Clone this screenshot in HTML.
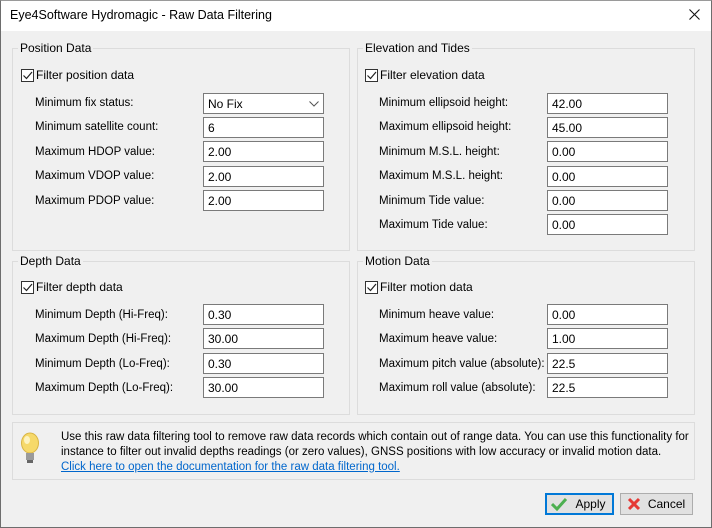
<!DOCTYPE html>
<html><head><meta charset="utf-8"><style>
*{box-sizing:border-box;margin:0;padding:0}
body{width:712px;height:528px;overflow:hidden;background:#f0f0f0;font-family:"Liberation Sans",sans-serif;font-size:11.5px;color:#000;position:relative}
.a{position:absolute;white-space:nowrap;line-height:16px}
.win{position:absolute;left:0;top:0;width:712px;height:528px;border:1px solid #6d6d6d;border-top:1px solid #9a9a9a}
.title{position:absolute;left:1px;top:1px;width:710px;height:30px;background:#fff}
.g{position:absolute;border:1px solid #dcdcdc}
.gl{position:absolute;background:#f0f0f0;padding:0 2px;top:-8px;left:5px;line-height:14px;font-size:12px}
.in{position:absolute;width:121px;height:21px;background:#fff;border:1px solid #7a7a7a;padding:3px 4px;line-height:15px;font-size:12px}
.cb{position:absolute;width:13px;height:13px;border:1px solid #333;background:#fff}
.cb svg{position:absolute;left:0;top:0}
.btn{position:absolute;height:22px;background:#e1e1e1;border:1px solid #adadad;text-align:center;line-height:20px;font-size:12px}
</style></head><body>
<div class="title"></div>
<div class="a" style="left:10px;top:7px;font-size:12.5px">Eye4Software Hydromagic - Raw Data Filtering</div>
<svg class="a" style="left:689px;top:9px" width="11" height="11"><path d="M0.5 0.5 L10.5 10.5 M10.5 0.5 L0.5 10.5" stroke="#111" stroke-width="1.1"/></svg>
<div class="win"></div>

<div class="g" style="left:12px;top:48px;width:338px;height:203px"><div class="gl">Position Data</div></div>
<div class="g" style="left:357px;top:48px;width:338px;height:203px"><div class="gl">Elevation and Tides</div></div>
<div class="g" style="left:12px;top:261px;width:338px;height:154px"><div class="gl">Depth Data</div></div>
<div class="g" style="left:357px;top:261px;width:338px;height:154px"><div class="gl">Motion Data</div></div>
<div class="g" style="left:12px;top:422px;width:683px;height:58px"></div>

<div class="cb" style="left:21px;top:69px"><svg width="11" height="11"><path d="M1.5 5.5 L4.5 8.5 L10 2" stroke="#222" stroke-width="1.2" fill="none"/></svg></div>
<div class="a" style="left:36px;top:67px;font-size:12px">Filter position data</div>
<div class="a" style="left:35px;top:95px">Minimum fix status:</div>
<div class="in" style="left:203px;top:93px">No Fix<svg style="position:absolute;right:4px;top:7px" width="10" height="6"><path d="M0.5 0.5 L5 5 L9.5 0.5" stroke="#555" fill="none"/></svg></div>
<div class="a" style="left:35px;top:119px">Minimum satellite count:</div>
<div class="in" style="left:203px;top:117px">6</div>
<div class="a" style="left:35px;top:144px">Maximum HDOP value:</div>
<div class="in" style="left:203px;top:141px">2.00</div>
<div class="a" style="left:35px;top:168px">Maximum VDOP value:</div>
<div class="in" style="left:203px;top:166px">2.00</div>
<div class="a" style="left:35px;top:193px">Maximum PDOP value:</div>
<div class="in" style="left:203px;top:190px">2.00</div>

<div class="cb" style="left:365px;top:69px"><svg width="11" height="11"><path d="M1.5 5.5 L4.5 8.5 L10 2" stroke="#222" stroke-width="1.2" fill="none"/></svg></div>
<div class="a" style="left:380px;top:67px;font-size:12px">Filter elevation data</div>
<div class="a" style="left:379px;top:95px">Minimum ellipsoid height:</div>
<div class="in" style="left:547px;top:93px">42.00</div>
<div class="a" style="left:379px;top:119px">Maximum ellipsoid height:</div>
<div class="in" style="left:547px;top:117px">45.00</div>
<div class="a" style="left:379px;top:144px">Minimum M.S.L. height:</div>
<div class="in" style="left:547px;top:141px">0.00</div>
<div class="a" style="left:379px;top:168px">Maximum M.S.L. height:</div>
<div class="in" style="left:547px;top:166px">0.00</div>
<div class="a" style="left:379px;top:193px">Minimum Tide value:</div>
<div class="in" style="left:547px;top:190px">0.00</div>
<div class="a" style="left:379px;top:217px">Maximum Tide value:</div>
<div class="in" style="left:547px;top:214px">0.00</div>

<div class="cb" style="left:21px;top:281px"><svg width="11" height="11"><path d="M1.5 5.5 L4.5 8.5 L10 2" stroke="#222" stroke-width="1.2" fill="none"/></svg></div>
<div class="a" style="left:36px;top:279px;font-size:12px">Filter depth data</div>
<div class="a" style="left:35px;top:307px">Minimum Depth (Hi-Freq):</div>
<div class="in" style="left:203px;top:304px">0.30</div>
<div class="a" style="left:35px;top:331px">Maximum Depth (Hi-Freq):</div>
<div class="in" style="left:203px;top:328px">30.00</div>
<div class="a" style="left:35px;top:356px">Minimum Depth (Lo-Freq):</div>
<div class="in" style="left:203px;top:353px">0.30</div>
<div class="a" style="left:35px;top:380px">Maximum Depth (Lo-Freq):</div>
<div class="in" style="left:203px;top:377px">30.00</div>

<div class="cb" style="left:365px;top:281px"><svg width="11" height="11"><path d="M1.5 5.5 L4.5 8.5 L10 2" stroke="#222" stroke-width="1.2" fill="none"/></svg></div>
<div class="a" style="left:380px;top:279px;font-size:12px">Filter motion data</div>
<div class="a" style="left:379px;top:307px">Minimum heave value:</div>
<div class="in" style="left:547px;top:304px">0.00</div>
<div class="a" style="left:379px;top:331px">Maximum heave value:</div>
<div class="in" style="left:547px;top:328px">1.00</div>
<div class="a" style="left:379px;top:356px">Maximum pitch value (absolute):</div>
<div class="in" style="left:547px;top:353px">22.5</div>
<div class="a" style="left:379px;top:380px">Maximum roll value (absolute):</div>
<div class="in" style="left:547px;top:377px">22.5</div>

<svg class="a" style="left:20px;top:431px" width="20" height="34"><ellipse cx="10" cy="12" rx="8.5" ry="10" fill="#f6d96a" stroke="#d9b545"/><ellipse cx="7" cy="9" rx="3" ry="4" fill="#fdf3c0"/><rect x="6" y="22" width="8" height="7" fill="#9a9a9a"/><rect x="7" y="29" width="6" height="3" fill="#666"/></svg>
<div class="a" style="left:61px;top:430px;font-size:11.5px;line-height:15px">Use this raw data filtering tool to remove raw data records which contain out of range data. You can use this functionality for<br>instance to filter out invalid depths readings (or zero values), GNSS positions with low accuracy or invalid motion data.<br><span style="color:#0066cc;text-decoration:underline">Click here to open the documentation for the raw data filtering tool.</span></div>

<div class="btn" style="left:545px;top:493px;width:69px;border:2px solid #0078d7;line-height:18px"><svg style="position:absolute;left:4px;top:2px" width="16" height="14"><path d="M1 7 L6 12 L15 2" stroke="#4caf50" stroke-width="3" fill="none"/></svg><span style="margin-left:22px">Apply</span></div>
<div class="btn" style="left:620px;top:493px;width:73px"><svg style="position:absolute;left:6px;top:3px" width="14" height="14"><path d="M2 2 L12 12 M12 2 L2 12" stroke="#e53935" stroke-width="3"/></svg><span style="margin-left:20px">Cancel</span></div>
</body></html>
